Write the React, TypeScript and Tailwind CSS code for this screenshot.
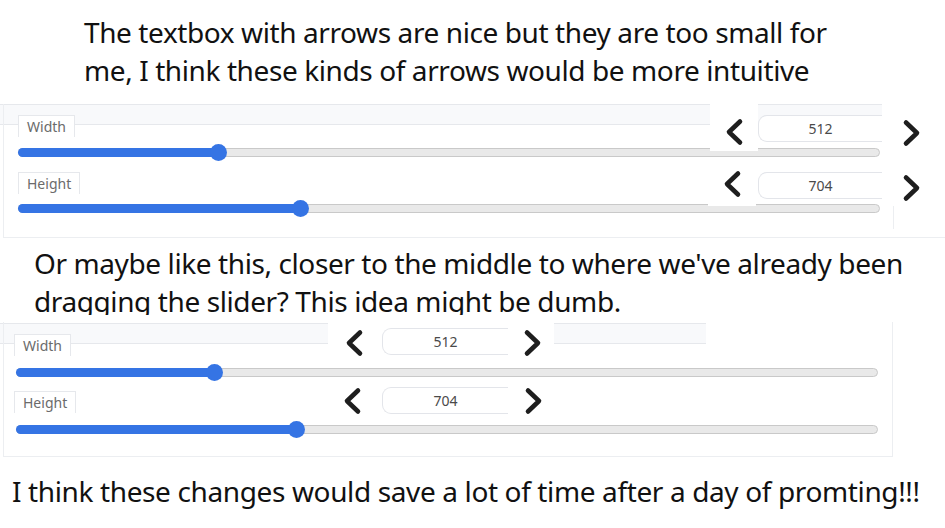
import React from "react";

const BLUE = "bg-[#3574e4]";
const UI_FONT = { fontFamily: '"Noto Sans", sans-serif' };
const TEXT_FONT = { fontFamily: '"Noto Sans", "Open Sans", sans-serif' };

function Chevron({ dir }: { dir: "left" | "right" }) {
  return (
    <svg width="20" height="28" viewBox="0 0 20 28" className="block">
      <polyline
        points={dir === "left" ? "16,3.5 5,14 16,24.5" : "4,3.5 15,14 4,24.5"}
        fill="none"
        stroke="#1e1e1e"
        strokeWidth="4.6"
        strokeLinecap="round"
        strokeLinejoin="round"
      />
    </svg>
  );
}

function Slider({ thumb }: { thumb: number }) {
  return (
    <div className="relative h-[9px] w-[862px] rounded-full border border-[#c9c9c9] bg-[#e9e9e9]">
      <div
        className={`absolute -left-px -top-px h-[9px] rounded-full ${BLUE}`}
        style={{ width: thumb + 2 }}
      />
      <div
        className={`absolute -top-[5px] h-[17px] w-[17px] rounded-full ${BLUE}`}
        style={{ left: thumb - 9 }}
      />
    </div>
  );
}

function Label({ text, w }: { text: string; w: string }) {
  return (
    <div
      className={`relative z-10 flex h-[22px] items-center border-l border-r border-t border-[#e6e8ec] bg-white pl-[8px] text-[14px] text-[#6b6b6b] ${w}`}
      style={UI_FONT}
    >
      {text}
    </div>
  );
}

function NumBox({ value, w }: { value: string; w: string }) {
  return (
    <div
      className={`flex h-[27px] items-center justify-center rounded-l-[9px] border-b border-l border-t border-[#e3e5ea] bg-white text-[14px] text-[#4a4a4a] ${w}`}
      style={UI_FONT}
    >
      {value}
    </div>
  );
}

function Band({ w }: { w: string }) {
  return <div className={`h-[21px] border-b border-t border-[#e6e8ec] bg-[#f8f9fb] ${w}`} />;
}

/* Panel with the arrows at the right edge */
function PanelRight() {
  return (
    <div className="h-[134px]">
      <Band w="w-[882px]" />
      <div className="-mt-[21px] ml-[3px] h-[134px] border-b border-l border-[#eceef1]">
        {/* Width row */}
        <div className="grid h-[44px] grid-cols-[706px_48px_124px_63px] items-start">
          <div className="ml-[14px] mt-[11px]">
            <Label text="Width" w="w-[57px]" />
          </div>
          <div className="relative z-10 flex h-[47px] items-center justify-center bg-white pt-[8px]">
            <Chevron dir="left" />
          </div>
          <div className="mt-[11px]">
            <NumBox value="512" w="w-[124px]" />
          </div>
          <div className="h-[44px] bg-white pl-[20px] pt-[15px]">
            <Chevron dir="right" />
          </div>
        </div>
        <div className="ml-[14px]">
          <Slider thumb={200} />
        </div>
        {/* Height row */}
        <div className="grid h-[47px] grid-cols-[704px_48px_126px_63px] items-start">
          <div className="ml-[14px] mt-[15px]">
            <Label text="Height" w="w-[62px]" />
          </div>
          <div className="relative z-10 mt-[3px] flex h-[46px] items-center justify-center bg-white pt-[2px]">
            <Chevron dir="left" />
          </div>
          <div className="mt-[15px] pl-[2px]">
            <NumBox value="704" w="w-[124px]" />
          </div>
          <div className="h-[47px] bg-white pl-[20px] pt-[17px]">
            <Chevron dir="right" />
          </div>
        </div>
        <div className="flex items-start">
          <div className="ml-[14px]">
            <Slider thumb={282} />
          </div>
          <div className="ml-[13px] mt-[2px] h-[23px] w-px bg-[#eceef1]" />
        </div>
      </div>
    </div>
  );
}

/* Panel with the arrows in the middle */
function PanelMiddle() {
  return (
    <div className="relative h-[136px]">
      <div className="pt-[1px]">
        <Band w="w-[706px]" />
      </div>
      <div className="-mt-[22px] ml-[3px] h-[135px] w-[890px] border-b border-l border-r border-[#eceef1]">
        {/* Width row */}
        <div className="grid h-[46px] grid-cols-[324px_226px_1fr] items-start">
          <div className="ml-[10px] mt-[12px]">
            <Label text="Width" w="w-[57px]" />
          </div>
          <div className="relative z-10 -mt-[1px] flex h-[43px] items-center bg-white">
            <div className="ml-[16px]">
              <Chevron dir="left" />
            </div>
            <div className="-mt-[3px] ml-[18px]">
              <NumBox value="512" w="w-[126px]" />
            </div>
            <div className="ml-[15px]">
              <Chevron dir="right" />
            </div>
          </div>
        </div>
        <div className="ml-[12px]">
          <Slider thumb={198} />
        </div>
        {/* Height row */}
        <div className="grid h-[48px] grid-cols-[324px_226px_1fr] items-start">
          <div className="ml-[10px] mt-[14px]">
            <Label text="Height" w="w-[62px]" />
          </div>
          <div className="relative z-10 mt-[6px] flex h-[36px] items-center bg-white">
            <div className="ml-[14px]">
              <Chevron dir="left" />
            </div>
            <div className="-mt-[2px] ml-[20px]">
              <NumBox value="704" w="w-[126px]" />
            </div>
            <div className="ml-[16px]">
              <Chevron dir="right" />
            </div>
          </div>
        </div>
        <div className="ml-[12px]">
          <Slider thumb={280} />
        </div>
      </div>
      {/* leftover white scraps of the cut-out over the tracks */}
      <div className="absolute left-[706px] top-[40px] h-[6px] w-[50px] bg-white" />
      <div className="absolute left-[706px] top-[97px] h-[6px] w-[50px] bg-white" />
    </div>
  );
}

export default function App() {
  return (
    <div className="h-[528px] w-[945px] overflow-hidden bg-white text-[#111]" style={TEXT_FONT}>
      {/* Text 1 */}
      <div className="h-[104px] pl-[84px] pt-[13px] text-[28px] leading-[38px] tracking-[-0.4px]">
        <div>The textbox with arrows are nice but they are too small for</div>
        <div>me, I think these kinds of arrows would be more intuitive</div>
      </div>

      <PanelRight />

      {/* Text 2 (bottom clipped by the pasted panel, as in the reference) */}
      <div className="h-[84px]">
        <div className="h-[77px] overflow-hidden pl-[34px] pt-[6px] text-[28px] leading-[38px] tracking-[-0.4px]">
          <div>Or maybe like this, closer to the middle to where we've already been</div>
          <div>dragging the slider? This idea might be dumb.</div>
        </div>
      </div>

      <PanelMiddle />

      {/* Text 3 */}
      <div className="h-[70px] pl-[12px] pt-[14px] text-[28px] leading-[38px] tracking-[-0.37px]">
        I think these changes would save a lot of time after a day of promting!!!
      </div>
    </div>
  );
}
